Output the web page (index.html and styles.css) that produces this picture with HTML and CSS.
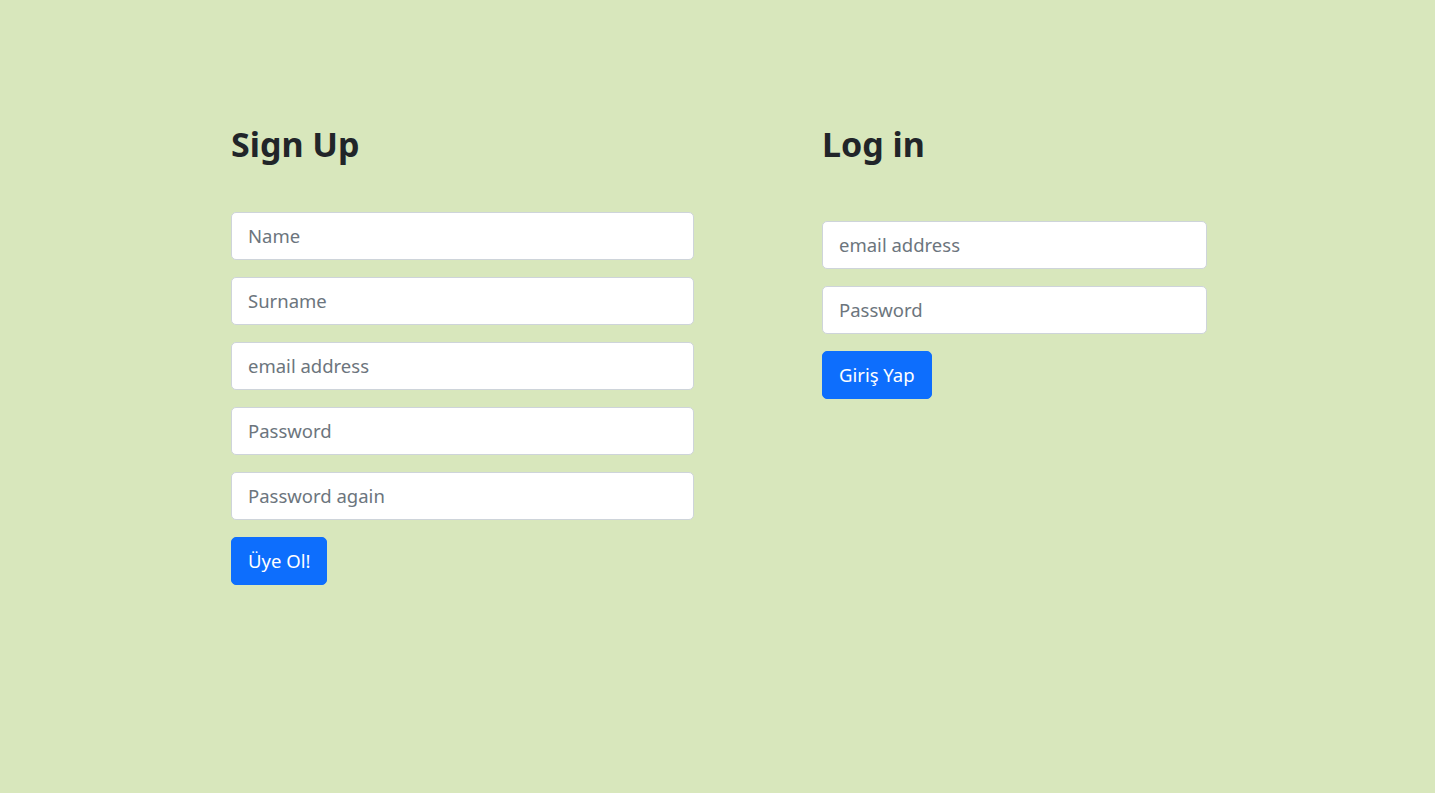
FILE: index.html
```html
<!DOCTYPE html>
<html lang="tr">
<head>
    <meta charset="UTF-8">
    <meta name="viewport" content="width=device-width, initial-scale=1.0">
    <title>Sign Up / Log in</title>
    <link rel="stylesheet" href="styles.css">
</head>
<body>
    <div class="container">
        <div class="signup">
            <h2>Sign Up</h2>
            <form id="signupForm">
                <input type="text" class="form-control" placeholder="Name">
                <input type="text" class="form-control" placeholder="Surname">
                <input type="email" class="form-control" placeholder="email address">
                <input type="password" class="form-control" placeholder="Password">
                <input type="password" class="form-control" placeholder="Password again">
                <button type="submit" class="btn">Üye Ol!</button>
            </form>
        </div>

        <div class="login">
            <h2>Log in</h2>
            <form id="loginForm">
                <input type="email" class="form-control" placeholder="email address">
                <input type="password" class="form-control" placeholder="Password">
                <button type="submit" class="btn">Giriş Yap</button>
            </form>
        </div>
    </div>
</body>
</html>
```

FILE: styles.css
```css
body {
    margin: 0;
    padding: 0;
    font-family: 'Noto Sans', 'Open Sans', sans-serif;
    background-color: #d8e7bc;
    color: #212529;
    min-height: 100vh;
}

.container {
    width: 976px;
    margin: 0 auto;
    padding: 124px 0 0 3px;
    display: flex;
    gap: 128px;
}

.signup {
    width: 463px;
}

.login {
    width: 385px;
}

h2 {
    margin: 0 0 47px;
    font-size: 34px;
    font-weight: 700;
    line-height: 1.2;
}

.login h2 {
    margin-bottom: 56px;
}

form {
    display: flex;
    flex-direction: column;
    align-items: flex-start;
}

.form-control {
    box-sizing: border-box;
    width: 100%;
    height: 48px;
    padding: 8px 16px;
    margin: 0 0 17px;
    font-family: inherit;
    font-size: 18.5px;
    line-height: 30px;
    color: #212529;
    background-color: #fff;
    border: 1px solid #ced4da;
    border-radius: 5px;
    outline: none;
}

.form-control::placeholder {
    color: #6c757d;
}

.btn {
    box-sizing: border-box;
    height: 48px;
    padding: 8px 16px;
    font-family: inherit;
    font-size: 18.5px;
    line-height: 30px;
    color: #fff;
    background-color: #0d6efd;
    border: 1px solid #0d6efd;
    border-radius: 5px;
    cursor: pointer;
}

.btn:hover {
    background-color: #0b5ed7;
}
```
